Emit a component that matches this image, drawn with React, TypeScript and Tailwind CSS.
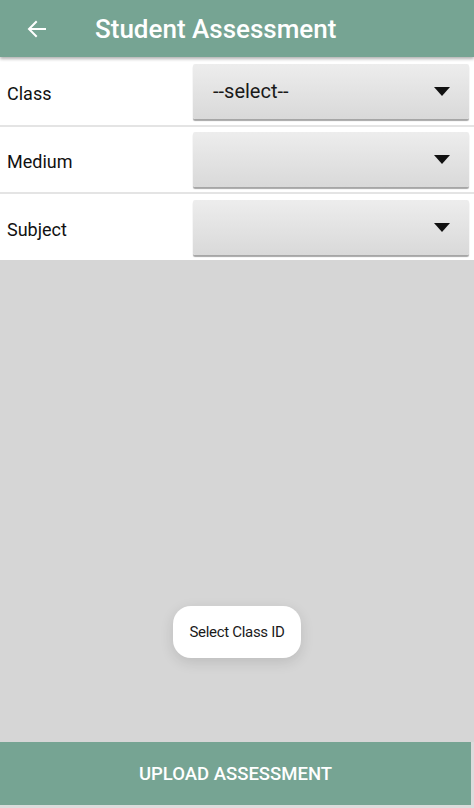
import React from "react";

function Arrow() {
  return (
    <svg width="24" height="24" viewBox="0 0 24 24" fill="none" stroke="white" strokeWidth="2" strokeLinecap="square">
      <path d="M20 12H5" />
      <path d="M11 5l-7 7 7 7" />
    </svg>
  );
}

function Spinner({ text }: { text?: string }) {
  return (
    <div className="w-[276px] h-[55px] rounded-[2px] bg-gradient-to-b from-[#ededed] to-[#d9d9d9] shadow-[0_2px_1px_rgba(0,0,0,0.35)] flex items-center justify-between pl-[20px] pr-[19px]">
      <span className="text-[20px] text-[#1a1a1a] leading-none">{text ?? ""}</span>
      <svg width="16" height="9" viewBox="0 0 16 9">
        <path d="M0 0H16L8 9Z" fill="#111" />
      </svg>
    </div>
  );
}

function Row({ label, text, h, last }: { label: string; text?: string; h: string; last?: boolean }) {
  return (
    <div className={`flex items-center justify-between pl-[7px] pr-[5px] ${h} ${last ? "" : "border-b-2 border-[#e4e4e4]"}`}>
      <span className="text-[18px] text-[#111] mt-[4px]">{label}</span>
      <Spinner text={text} />
    </div>
  );
}

export default function App() {
  return (
    <div className="w-[474px] h-[808px] flex flex-col bg-[#dcdcdc] overflow-hidden" style={{ fontFamily: "Roboto, 'Noto Sans', sans-serif" }}>
      <div className="h-[57px] bg-[#76a493] flex items-center shadow-[0_2px_3px_rgba(0,0,0,0.3)] relative z-10">
        <div className="w-[95px] pl-[25px] flex items-center">
          <Arrow />
        </div>
        <span className="text-white text-[26px] font-medium mt-[2px]">Student Assessment</span>
      </div>
      <div className="bg-white">
        <Row label="Class" text="--select--" h="h-[70px]" />
        <Row label="Medium" h="h-[67px]" />
        <Row label="Subject" h="h-[66px]" last />
      </div>
      <div className="flex-1 bg-[#d6d6d6] flex flex-col items-center justify-end pb-[84px]">
        <div className="w-[128px] h-[52px] rounded-[18px] bg-white shadow-[0_4px_14px_rgba(0,0,0,0.12)] flex items-center justify-center">
          <span className="text-[15px] text-[#1a1a1a] tracking-[-0.3px]">Select Class ID</span>
        </div>
      </div>
      <div className="h-[63px] mr-[3px] mb-[3px] bg-[#76a493] flex items-center justify-center">
        <span className="text-white text-[18.5px] font-medium mt-[3px]">UPLOAD ASSESSMENT</span>
      </div>
    </div>
  );
}
